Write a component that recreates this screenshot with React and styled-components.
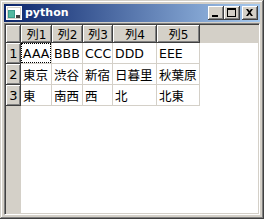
import React from 'react';
import styled, { createGlobalStyle } from 'styled-components';

const GlobalStyle = createGlobalStyle`
  html, body {
    margin: 0;
    padding: 0;
    background: #d4d0c8;
  }
`;

const raised = `
  box-shadow: inset -1px -1px #404040, inset 1px 1px #fff, inset -2px -2px #808080;
`;

const Window = styled.div`
  box-sizing: border-box;
  width: 264px;
  height: 219px;
  padding: 4px;
  background: #d4d0c8;
  box-shadow: inset -1px -1px #404040, inset 1px 1px #d4d0c8,
    inset -2px -2px #808080, inset 2px 2px #fff;
  display: flex;
  flex-direction: column;
`;

const TitleBar = styled.div`
  height: 18px;
  flex: none;
  display: flex;
  align-items: center;
  padding: 0 2px;
  background: linear-gradient(to right, #0a246a, #a6caf0);
`;

const AppIcon = styled.svg`
  width: 16px;
  height: 16px;
  flex: none;
`;

const Title = styled.span`
  margin-left: 3px;
  flex: 1;
  color: #fff;
  font-family: "DejaVu Sans", sans-serif;
  font-weight: bold;
  font-size: 11px;
  line-height: 18px;
`;

const Buttons = styled.div`
  display: flex;
  align-items: center;
`;

const CapButton = styled.div`
  width: 16px;
  height: 14px;
  background: #d4d0c8;
  ${raised}
  display: flex;
  align-items: center;
  justify-content: center;
  margin-left: ${p => (p.$gap ? '2px' : '0')};
`;

const Client = styled.div`
  flex: 1;
  margin-top: 1px;
  box-sizing: border-box;
  border: 1px solid;
  border-color: #808080 #fff #fff #808080;
  box-shadow: inset 1px 1px #404040, inset -1px -1px #d4d0c8;
  padding: 1px;
  display: flex;
  overflow: hidden;
`;

const Gutter = styled.div`
  width: 15px;
  flex: none;
  background: #d4d0c8;
  display: flex;
  flex-direction: column;
`;

const Sheet = styled.div`
  flex: 1;
  background: #fff;
  display: flex;
  flex-direction: column;
`;

const HeadRow = styled.div`
  height: 18px;
  flex: none;
  display: flex;
  background: #d4d0c8;
`;

const Row = styled.div`
  height: 21px;
  flex: none;
  display: flex;
`;

const HeadCell = styled.div`
  box-sizing: border-box;
  width: ${p => p.$w}px;
  height: ${p => p.$h || 18}px;
  flex: none;
  ${raised}
  display: flex;
  align-items: center;
  justify-content: center;
  font-family: "DejaVu Sans", "Noto Sans CJK JP", sans-serif;
  font-size: ${p => (p.$num ? 13 : 12)}px;
  color: #000;
  padding-bottom: 1px;
`;

const Cell = styled.div`
  position: relative;
  box-sizing: border-box;
  width: ${p => p.$w}px;
  height: 21px;
  flex: none;
  border-right: 1px solid #d4d0c8;
  border-bottom: 1px solid #d4d0c8;
  display: flex;
  align-items: center;
  padding-left: 2px;
  font-family: "DejaVu Sans", "Noto Sans CJK JP", sans-serif;
  font-size: 12.5px;
  color: #000;
  white-space: nowrap;
  overflow: hidden;

  ${p => p.$focus && `
    &::after {
      content: '';
      position: absolute;
      inset: 0;
      border: 1px dotted #000;
    }
  `}
`;

const columns = [
  { name: '列1', w: 31 },
  { name: '列2', w: 31 },
  { name: '列3', w: 30 },
  { name: '列4', w: 44 },
  { name: '列5', w: 43 },
];

const rows = [
  ['AAA', 'BBB', 'CCC', 'DDD', 'EEE'],
  ['東京', '渋谷', '新宿', '日暮里', '秋葉原'],
  ['東', '南西', '西', '北', '北東'],
];

const MinGlyph = () => (
  <svg width="16" height="14" viewBox="0 0 16 14">
    <rect x="4" y="9" width="6" height="2" fill="#000" />
  </svg>
);

const MaxGlyph = () => (
  <svg width="16" height="14" viewBox="0 0 16 14">
    <rect x="3.5" y="2.5" width="8" height="8" fill="none" stroke="#000" />
    <rect x="3" y="2" width="9" height="2" fill="#000" />
  </svg>
);

const CloseGlyph = () => (
  <svg width="16" height="14" viewBox="0 0 16 14">
    <path d="M4 3h2l1.5 2 1.5-2h2l-2.5 3.5L11 10H9L7.5 8 6 10H4l2.5-3.5z" fill="#000" />
  </svg>
);

export default function App() {
  return (
    <>
      <GlobalStyle />
      <Window>
        <TitleBar>
          <AppIcon viewBox="0 0 16 16">
            <rect x="0.5" y="1.5" width="15" height="13" fill="#d4d0c8" stroke="#fff" />
            <rect x="2" y="3" width="12" height="10" fill="#fff" />
            <rect x="2" y="5" width="7" height="8" fill="#3a9a8a" />
            <rect x="3" y="6" width="5" height="6" fill="#52b8a0" />
            <rect x="10" y="10" width="4" height="3" fill="#404040" />
          </AppIcon>
          <Title>python</Title>
          <Buttons>
            <CapButton><MinGlyph /></CapButton>
            <CapButton><MaxGlyph /></CapButton>
            <CapButton $gap><CloseGlyph /></CapButton>
          </Buttons>
        </TitleBar>
        <Client>
          <Gutter>
            <HeadCell $w={15} />
            {rows.map((_, i) => (
              <HeadCell key={i} $w={15} $h={21} $num>{i + 1}</HeadCell>
            ))}
          </Gutter>
          <Sheet>
            <HeadRow>
              {columns.map(c => (
                <HeadCell key={c.name} $w={c.w}>{c.name}</HeadCell>
              ))}
            </HeadRow>
            {rows.map((r, i) => (
              <Row key={i}>
                {r.map((v, j) => (
                  <Cell key={j} $w={columns[j].w} $focus={i === 0 && j === 0}>{v}</Cell>
                ))}
              </Row>
            ))}
          </Sheet>
        </Client>
      </Window>
    </>
  );
}
